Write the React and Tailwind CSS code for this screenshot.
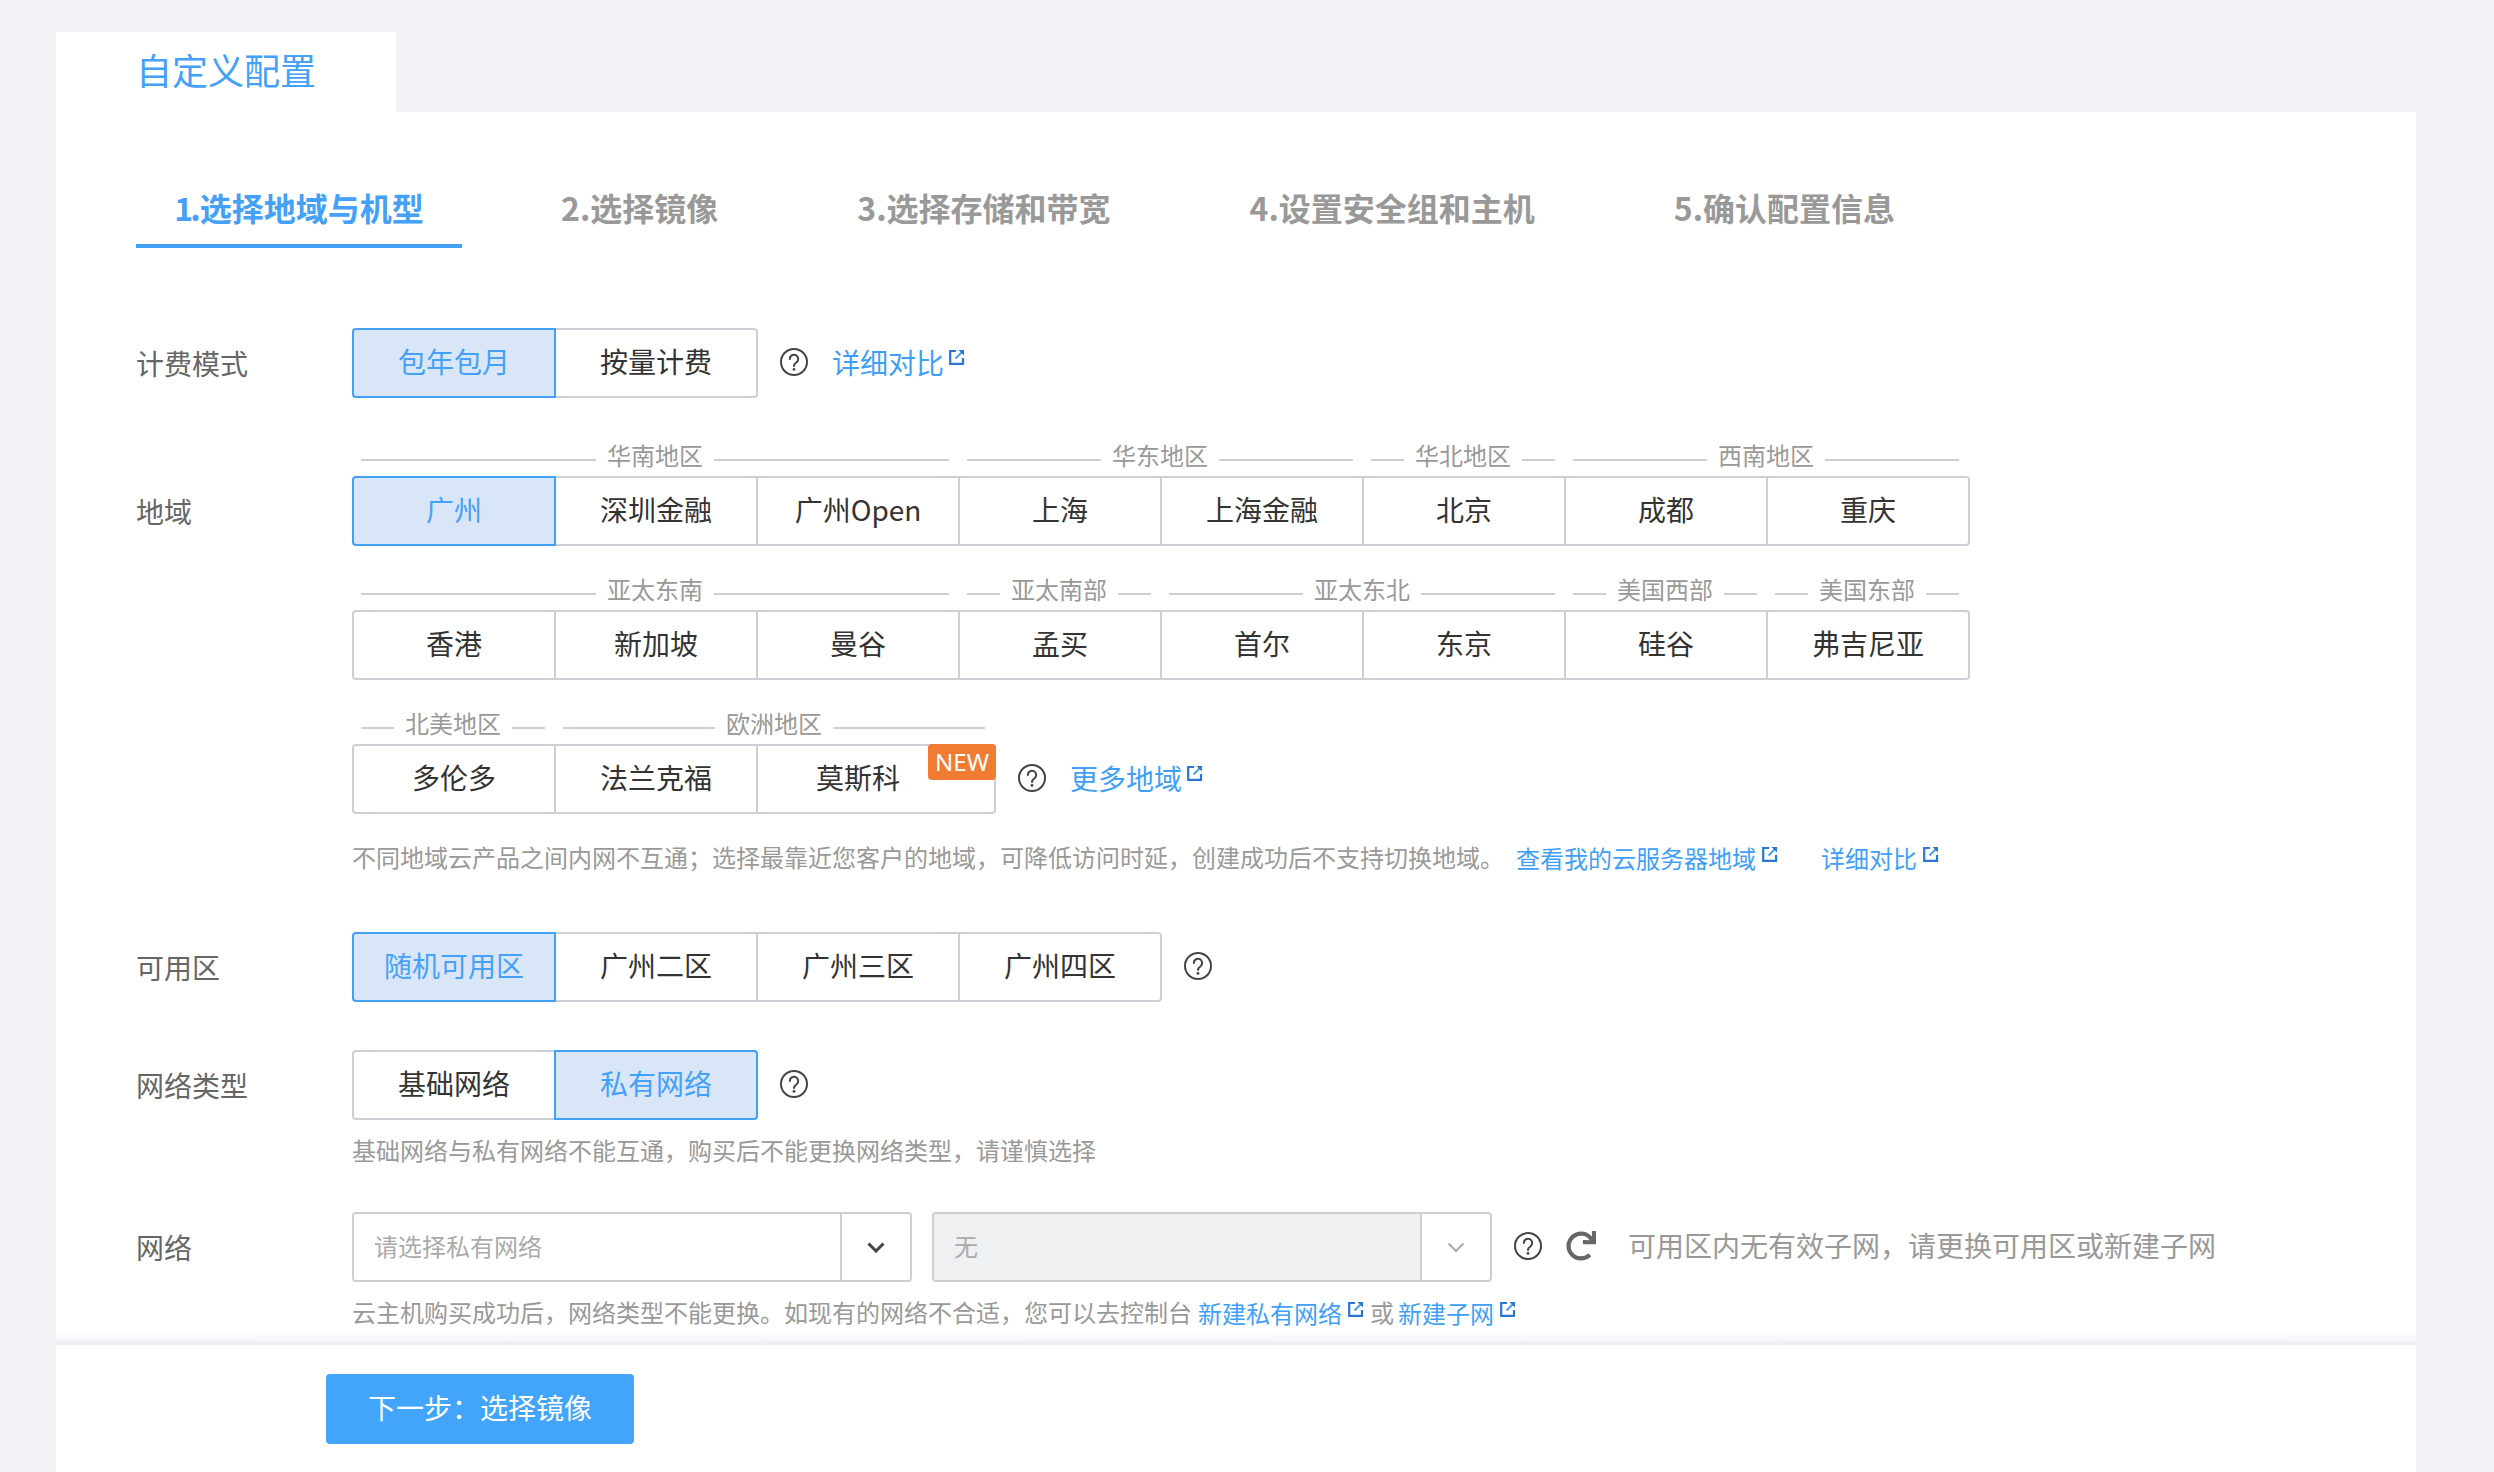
import React from "react";
import { FaRedo } from "react-icons/fa";

const font = { fontFamily: '"Noto Sans CJK SC", sans-serif' };

function Help() {
  return (
    <svg width="28" height="28" viewBox="0 0 28 28" fill="none" className="mb-[3px] block shrink-0">
      <circle cx="14" cy="14" r="13" stroke="#444" strokeWidth="2" />
      <path d="M9.8 11a4.2 4.2 0 1 1 6.8 3.3c-1.5 1.1-2.6 1.9-2.6 3.7" stroke="#444" strokeWidth="2" strokeLinecap="round" />
      <circle cx="14" cy="21.4" r="1.4" fill="#444" />
    </svg>
  );
}

function Ext() {
  return (
    <svg width="16" height="16" viewBox="0 0 16 16" fill="none" className="block shrink-0">
      <path d="M7 2H1.2v12.8H14V9" stroke="#2a76d2" strokeWidth="2.2" />
      <path d="M6.5 9.5L13.5 2.5" stroke="#4a9cf0" strokeWidth="2" />
      <path d="M9.5 1h5.5v5.5z" fill="#2a76d2" />
    </svg>
  );
}

function Btn({ label, active, first, last, width, shiftLeft, pad, children }) {
  return (
    <div
      className={
        "relative flex h-[70px] shrink-0 items-center box-border border-y-2 border-r-2 pb-[5px] text-[28px] leading-none " +
        (width ? width : first ? "w-[204px]" : "w-[202px]") + " " +
        (pad ? "pl-[58px] " : "justify-center ") +
        (first || shiftLeft ? "border-l-2 " : "") +
        (shiftLeft ? "-ml-[2px] " : "") +
        (first ? "rounded-l-[4px] " : "") +
        (last ? "rounded-r-[4px] " : "") +
        (active
          ? "z-10 border-[#42a0f5] bg-[#d9e6f7] text-[#45a1f7] "
          : "border-[#ccd0d6] bg-white text-[#333333] ")
      }
    >
      {label}
      {children}
    </div>
  );
}

function Group({ items, activeIndex = -1 }) {
  return (
    <div className="flex">
      {items.map((it, i) => (
        <Btn key={it} label={it} active={i === activeIndex} first={i === 0} last={i === items.length - 1} />
      ))}
    </div>
  );
}

function GroupLabels({ groups }) {
  return (
    <div className="flex h-[36px] items-center">
      {groups.map(([name, span]) => (
        <div
          key={name}
          className={
            "flex items-center px-[9px] pb-[6px] " +
            (span === 1 ? "w-[202px]" : span === 2 ? "w-[404px]" : span === 3 ? "w-[606px]" : "w-[440px]")
          }
        >
          <span className="mt-[9px] h-[2px] flex-1 bg-[#ccd0d6]" />
          <span className="px-[11px] text-[24px] leading-none text-[#999999]">{name}</span>
          <span className="mt-[9px] h-[2px] flex-1 bg-[#ccd0d6]" />
        </div>
      ))}
    </div>
  );
}

function Step({ children, active, width = "" }) {
  return (
    <div
      className={
        "flex h-[70px] items-center justify-center border-b-4 pb-[8px] text-[32px] font-bold leading-none " +
        (width ? width + " " : "px-[40px] ") +
        (active ? "border-[#42a0f5] text-[#45a1f7]" : "border-transparent text-[#999999]")
      }
    >
      {children}
    </div>
  );
}

function Label({ text, className = "" }) {
  return <div className={"w-[216px] shrink-0 text-[28px] leading-none text-[#666666] " + className}>{text}</div>;
}

function Link({ text, large }) {
  return (
    <span className={"inline-flex items-start text-[#3f9ff8] " + (large ? "mb-[3px] text-[28px]" : "mt-[2px] text-[24px]")}>
      <span className="leading-none">{text}</span>
      <span className={large ? "ml-[5px] mt-[1px]" : "ml-[6px]"}><Ext /></span>
    </span>
  );
}

function Select({ text, disabled }) {
  return (
    <div className="flex h-[70px] w-[560px] shrink-0 overflow-hidden rounded-[4px] border-2 border-[#cfcfcf] bg-white">
      <div className={"flex flex-1 items-center px-[20px] pb-[2px] text-[24px] leading-none text-[#aaaaaa] " + (disabled ? "bg-[#eff0f1]" : "")}>
        {text}
      </div>
      <div className="flex w-[70px] items-center justify-center border-l-2 border-[#cfcfcf]">
        <svg width="18" height="11" viewBox="0 0 18 11" fill="none">
          <path d="M1.5 1.5L9 9l7.5-7.5" stroke={disabled ? "#aaaaaa" : "#444444"} strokeWidth={disabled ? 2 : 3} />
        </svg>
      </div>
    </div>
  );
}

function Hint({ children, className = "" }) {
  return (
    <div className={"flex h-[32px] items-center whitespace-nowrap text-[24px] leading-none text-[#999999] " + className}>
      {children}
    </div>
  );
}

export default function App() {
  return (
    <div className="flex h-[1472px] w-full flex-col overflow-hidden bg-[#f0f2f6] pl-[56px] pr-[78px] pt-[32px]" style={font}>
      <div className="flex h-[80px] w-[340px] shrink-0 items-center bg-white pb-[6px] pl-[80px] text-[36px] leading-none text-[#45a1f7]">
        自定义配置
      </div>
      <div className="flex h-[1230px] shrink-0 flex-col overflow-hidden bg-white px-[80px]">
        <div className="mt-[66px] flex gap-[59px]">
          <Step active width="w-[326px]">
            <span className="tracking-[-3px]">1.</span>
            <span className="ml-[2px]">选择地域与机型</span>
          </Step>
          <Step>2.选择镜像</Step>
          <Step>3.选择存储和带宽</Step>
          <Step>4.设置安全组和主机</Step>
          <Step>5.确认配置信息</Step>
        </div>

        <div className="mt-[80px] flex items-center">
          <Label text="计费模式" />
          <Btn label="包年包月" active first />
          <Btn label="按量计费" last />
          <span className="ml-[22px]"><Help /></span>
          <span className="ml-[24px] flex"><Link text="详细对比" large /></span>
        </div>

        <div className="mt-[42px] flex">
          <Label text="地域" className="pt-[57px]" />
          <div className="flex flex-col">
            <GroupLabels groups={[["华南地区", 3], ["华东地区", 2], ["华北地区", 1], ["西南地区", 2]]} />
            <Group activeIndex={0} items={["广州", "深圳金融", "广州Open", "上海", "上海金融", "北京", "成都", "重庆"]} />
            <div className="mt-[28px]">
              <GroupLabels groups={[["亚太东南", 3], ["亚太南部", 1], ["亚太东北", 2], ["美国西部", 1], ["美国东部", 1]]} />
            </div>
            <Group items={["香港", "新加坡", "曼谷", "孟买", "首尔", "东京", "硅谷", "弗吉尼亚"]} />
            <div className="mt-[28px]">
              <GroupLabels groups={[["北美地区", 1], ["欧洲地区", 4]]} />
            </div>
            <div className="flex items-center">
              <Btn label="多伦多" first />
              <Btn label="法兰克福" />
              <Btn label="莫斯科" last width="w-[238px]" pad>
                <span className="absolute -right-[2px] -top-[2px] flex h-[36px] w-[68px] items-center justify-center rounded-[4px] bg-[#f07c33] font-['Noto_Sans'] text-[24px] leading-none text-white">
                  NEW
                </span>
              </Btn>
              <span className="ml-[22px]"><Help /></span>
              <span className="ml-[24px] flex"><Link text="更多地域" large /></span>
            </div>
            <Hint className="mt-[27px]">
              <span>不同地域云产品之间内网不互通；选择最靠近您客户的地域，可降低访问时延，创建成功后不支持切换地域。</span>
              <span className="ml-[12px] flex"><Link text="查看我的云服务器地域" /></span>
              <span className="ml-[43px] flex"><Link text="详细对比" /></span>
            </Hint>
          </div>
        </div>

        <div className="mt-[59px] flex items-center">
          <Label text="可用区" />
          <Btn label="随机可用区" active first />
          <Btn label="广州二区" />
          <Btn label="广州三区" />
          <Btn label="广州四区" last />
          <span className="ml-[22px]"><Help /></span>
        </div>

        <div className="mt-[48px] flex items-center">
          <Label text="网络类型" />
          <Btn label="基础网络" first />
          <Btn label="私有网络" active last shiftLeft width="w-[204px]" />
          <span className="ml-[22px]"><Help /></span>
        </div>
        <Hint className="ml-[216px] mt-[14px]">基础网络与私有网络不能互通，购买后不能更换网络类型，请谨慎选择</Hint>

        <div className="mt-[46px] flex items-center">
          <Label text="网络" />
          <Select text="请选择私有网络" />
          <span className="ml-[20px]"><Select text="无" disabled /></span>
          <span className="ml-[22px]"><Help /></span>
          <FaRedo className="mb-[3px] ml-[24px] shrink-0 text-[30px] text-[#666666]" />
          <span className="ml-[32px] pb-[4px] text-[28px] leading-none text-[#999999]">可用区内无有效子网，请更换可用区或新建子网</span>
        </div>
        <Hint className="ml-[216px] mt-[14px]">
          <span>云主机购买成功后，网络类型不能更换。如现有的网络不合适，您可以去控制台</span>
          <span className="ml-[6px] flex"><Link text="新建私有网络" /></span>
          <span className="ml-[6px]">或</span>
          <span className="ml-[4px] flex"><Link text="新建子网" /></span>
        </Hint>
      </div>

      <div className="relative flex-1 border-t-[3px] border-[#dfe3e8] bg-white pl-[270px] pt-[29px]">
        <div className="absolute bottom-full left-0 right-0 h-[14px] bg-gradient-to-b from-transparent to-[#eef0f3]" />
        <div className="flex h-[70px] w-[308px] items-center justify-center rounded-[4px] bg-[#42a5fb] pb-[4px] text-[28px] leading-none text-white">
          下一步：选择镜像
        </div>
      </div>
    </div>
  );
}
